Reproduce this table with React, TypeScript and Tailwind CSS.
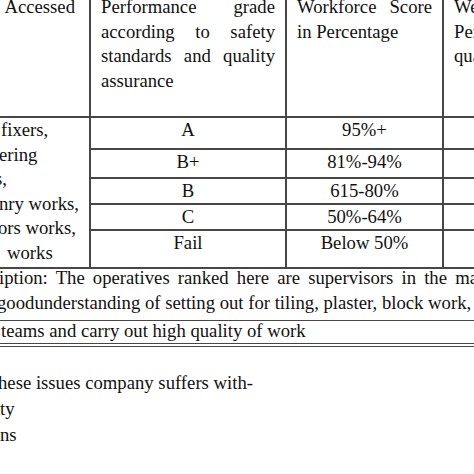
import React from "react";

const LINE = "bg-[#474747]";

export default function App() {
  return (
    <div className="w-[474px] h-[474px] overflow-hidden bg-white text-[#111111] text-[18.7px] leading-[24.5px] font-['Liberation_Serif','Times_New_Roman',serif]">
      {/* table */}
      <div
        className={`ml-[-60px] mt-[-10px] w-[604px] grid grid-cols-[149px_194px_155px_100px] grid-rows-[126px_30px_27px_24px_24px_36px] gap-[2px] pb-[2px] ${LINE}`}
      >
        {/* header */}
        <div className="bg-white pt-[5px] pr-[14px] text-right">Accessed</div>
        <div className="bg-white pt-[5px] px-[10px] text-justify">
          Performance grade according to safety standards and quality assurance
        </div>
        <div className="bg-white pt-[5px] px-[10px] text-justify">
          Workforce Score in Percentage
        </div>
        <div className="bg-white pt-[5px] pl-[10px] whitespace-nowrap">
          <div>Weightage</div>
          <div>Performance</div>
          <div>quality</div>
        </div>

        {/* body col1 */}
        <div className="row-span-5 bg-white whitespace-nowrap">
          <div className="pl-[61px]">fixers,</div>
          <div className="pl-[59px]">ering</div>
          <div className="pl-[55px]">s,</div>
          <div className="pl-[59px]">nry works,</div>
          <div className="pl-[58px]">ors works,</div>
          <div className="pl-[67px]">works</div>
        </div>

        <div className="bg-white text-center">A</div>
        <div className="bg-white text-center">95%+</div>
        <div className="bg-white" />

        <div className="bg-white text-center">B+</div>
        <div className="bg-white text-center">81%-94%</div>
        <div className="bg-white" />

        <div className="bg-white text-center">B</div>
        <div className="bg-white text-center">615-80%</div>
        <div className="bg-white" />

        <div className="bg-white text-center">C</div>
        <div className="bg-white text-center">50%-64%</div>
        <div className="bg-white" />

        <div className="bg-white text-center">Fail</div>
        <div className="bg-white text-center">Below 50%</div>
        <div className="bg-white" />
      </div>

      {/* description rows */}
      <div className="mt-[-4px] leading-[25px] whitespace-nowrap">
        <div className="[word-spacing:3.5px] ml-[-1px]">
          iption: The operatives ranked here are supervisors in the main
        </div>
        <div className="ml-[-3px]">
          goodunderstanding of setting out for tiling, plaster, block work,
        </div>
      </div>
      <div className={`mt-[5px] h-[1px] ${LINE}`} />
      <div className="mt-[-3px] leading-[25px] whitespace-nowrap pl-[1px]">
        teams and carry out high quality of work
      </div>
      <div className={`h-[1px] ${LINE}`} />
      <div className="h-[2px]" />
      <div className={`h-[1px] ${LINE}`} />

      {/* text below */}
      <div className="mt-[23px] leading-[26px] whitespace-nowrap">
        <div className="ml-[-2px]">hese issues company suffers with-</div>
        <div>ty</div>
        <div>ns</div>
      </div>
    </div>
  );
}
